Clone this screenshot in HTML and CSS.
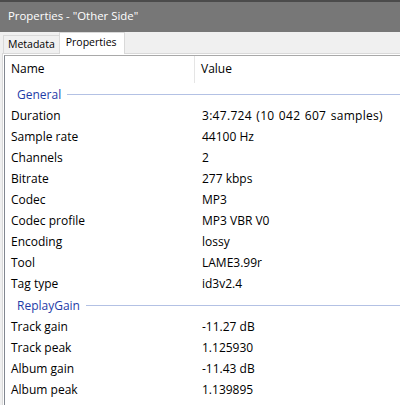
FILE: index.html
```html
<!DOCTYPE html>
<html>
<head>
<meta charset="utf-8">
<link rel="stylesheet" href="styles.css">
</head>
<body>
<div class="window">
  <div class="topstrip"></div>
  <div class="titlebar">Properties - "Other Side"</div>
  <div class="tabs">
    <div class="tab">Metadata</div>
    <div class="tab active">Properties</div>
  </div>
  <div class="panel">
    <div class="list">
      <div class="header">
        <div class="hcell name">Name</div>
        <div class="hcell value">Value</div>
      </div>
      <div class="group"><span class="gtitle">General</span><span class="gline"></span></div>
      <div class="row"><div class="c1">Duration</div><div class="c2 wide">3:47.724 (10 042 607 samples)</div></div>
      <div class="row"><div class="c1">Sample rate</div><div class="c2">44100 Hz</div></div>
      <div class="row"><div class="c1">Channels</div><div class="c2">2</div></div>
      <div class="row"><div class="c1">Bitrate</div><div class="c2">277 kbps</div></div>
      <div class="row"><div class="c1">Codec</div><div class="c2">MP3</div></div>
      <div class="row"><div class="c1">Codec profile</div><div class="c2">MP3 VBR V0</div></div>
      <div class="row"><div class="c1">Encoding</div><div class="c2">lossy</div></div>
      <div class="row"><div class="c1">Tool</div><div class="c2">LAME3.99r</div></div>
      <div class="row"><div class="c1">Tag type</div><div class="c2">id3v2.4</div></div>
      <div class="group"><span class="gtitle">ReplayGain</span><span class="gline"></span></div>
      <div class="row"><div class="c1">Track gain</div><div class="c2">-11.27 dB</div></div>
      <div class="row"><div class="c1">Track peak</div><div class="c2">1.125930</div></div>
      <div class="row"><div class="c1">Album gain</div><div class="c2">-11.43 dB</div></div>
      <div class="row"><div class="c1">Album peak</div><div class="c2">1.139895</div></div>
    </div>
  </div>
</div>
</body>
</html>
```

FILE: styles.css
```css
html, body {
  margin: 0;
  padding: 0;
  background: #f0f0f0;
}
.window {
  width: 400px;
  height: 405px;
  overflow: hidden;
  font-family: "Open Sans", "Noto Sans", sans-serif;
  font-size: 12px;
  color: #000;
  display: flex;
  flex-direction: column;
}
.topstrip {
  height: 2px;
  background: #4b4b4b;
}
.titlebar {
  height: 30px;
  line-height: 27px;
  background: #777777;
  color: #fff;
  padding-left: 8px;
  font-size: 11.4px;
}
.tabs {
  height: 21px;
  display: flex;
  align-items: flex-end;
  padding-left: 3px;
  background: #f0f0f0;
  font-size: 10.5px;
}
.tab {
  height: 17px;
  line-height: 16px;
  padding: 0 4px 0 4px;
  border: 1px solid #d9d9d9;
  border-bottom: none;
  background: #f0f0f0;
  color: #000;
}
.tab.active {
  height: 21px;
  line-height: 19px;
  background: #fff;
  padding: 0 7px 0 6px;
  margin-left: -1px;
  margin-bottom: -1px;
  position: relative;
  z-index: 1;
}
.panel {
  flex: 1;
  margin-left: 2px;
  border-top: 1px solid #d9d9d9;
  border-left: 1px solid #d9d9d9;
  background: #fff;
  padding: 1px 0 0 1px;
  display: flex;
}
.list {
  flex: 1;
  border-top: 1px solid #a9a9a9;
  border-left: 1px solid #828790;
  background: #fff;
}
.header {
  display: flex;
  height: 27px;
  align-items: center;
}
.hcell {
  height: 27px;
  line-height: 26px;
}
.hcell.name {
  width: 183px;
  padding-left: 6px;
  border-right: 1px solid #e5e5e5;
}
.hcell.value {
  padding-left: 6px;
}
.group {
  height: 22px;
  display: flex;
  align-items: center;
  padding-left: 12px;
}
.gtitle {
  color: #1e3ca8;
  padding-right: 6px;
}
.gline {
  flex: 1;
  height: 1px;
  background: #b3c1e4;
}
.row {
  display: flex;
  height: 21px;
  line-height: 21px;
}
.c1 {
  width: 191px;
  padding-left: 6px;
}
.c2 {
  flex: 1;
}
.c2.wide {
  word-spacing: 1px;
  letter-spacing: 0.3px;
}
```
